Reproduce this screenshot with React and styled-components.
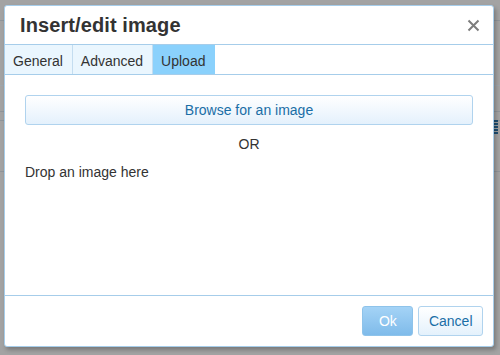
import React from 'react'
import styled, { createGlobalStyle } from 'styled-components'

const GlobalStyle = createGlobalStyle`
html, body {
  margin: 0;
  padding: 0;
  background: #a3a3a3;
  font-family: "Liberation Sans", Arial, sans-serif;
}
`

const Page = styled.div`
position: relative;
width: 500px;
height: 355px;
overflow: hidden;
background: #a3a3a3;
`

const Backdrop = styled.div`
display: flex;
flex-direction: column;
width: 100%;
height: 100%;
`

const BackRow = styled.div`
height: ${props => props.h}px;
border-bottom: 1px solid ${props => props.line || '#8f959a'};
`

const Dialog = styled.div`
position: absolute;
left: 4px;
top: 5px;
width: 488px;
height: 340px;
display: flex;
flex-direction: column;
background: #fff;
border: 1px solid #a6cdea;
border-radius: 3px;
box-shadow: 2px 3px 4px rgba(0, 0, 0, 0.25);
`

const Header = styled.div`
height: 38px;
display: flex;
align-items: center;
justify-content: space-between;
padding: 0 12px 0 15px;
border-bottom: 1px solid #a6cdea;
`

const Title = styled.h1`
margin: 0;
font-size: 20px;
font-weight: bold;
color: #333;
letter-spacing: 0.1px;
`

const Close = styled.button`
border: 0;
background: none;
padding: 0;
width: 16px;
height: 16px;
display: flex;
align-items: center;
justify-content: center;
cursor: pointer;
`

const Tabs = styled.div`
display: flex;
height: 29px;
border-bottom: 1px solid #a6cdea;
`

const Tab = styled.div`
display: flex;
align-items: center;
padding: 2px 9px 0 8px;
font-size: 14px;
color: #333;
background: ${props => props.active ? '#8ad1fc' : '#eaf6fe'};
border-right: 1px solid ${props => props.active ? '#8ad1fc' : '#c4ddf0'};
`

const Body = styled.div`
flex: 1;
padding: 20px 20px 0;
display: flex;
flex-direction: column;
`

const Button = styled.button`
height: 30px;
padding: 0 9.5px;
font-family: "Liberation Sans", Arial, sans-serif;
font-size: 14px;
border-radius: 3px;
cursor: pointer;
color: ${props => props.primary ? '#fff' : '#1a6ea6'};
border: 1px solid ${props => props.primary ? '#8ec3ea' : '#b0d3ee'};
background: ${props => props.primary
  ? 'linear-gradient(#a4d3f6, #7fbbea)'
  : 'linear-gradient(#ffffff, #e4f1fc)'};
`

const WideButton = styled(Button)`
width: 100%;
`

const OkButton = styled(Button)`
width: 51px;
`

const Or = styled.div`
text-align: center;
font-size: 14px;
color: #333;
margin-top: 11px;
`

const Drop = styled.div`
font-size: 14px;
color: #333;
margin-top: 12px;
`

const Footer = styled.div`
height: 50px;
border-top: 1px solid #a6cdea;
display: flex;
align-items: center;
justify-content: flex-end;
gap: 5px;
padding: 0 10px;
`

const Marker = styled.div`
position: absolute;
right: 2px;
top: 120px;
width: 4px;
height: 14px;
background: repeating-linear-gradient(#1d4f73 0 2px, transparent 2px 3px);
`

const App = () => {
  return (
    <Page>
      <GlobalStyle />
      <Backdrop>
        <BackRow h={20} />
        <BackRow h={64} line="#9ea6ad" />
        <BackRow h={25} />
        <BackRow h={8} />
        <BackRow h={50} />
      </Backdrop>
      <Marker />
      <Dialog>
        <Header>
          <Title>Insert/edit image</Title>
          <Close aria-label="Close">
            <svg width="13" height="13" viewBox="0 0 13 13">
              <path d="M1.5 1.5 L11.5 11.5 M11.5 1.5 L1.5 11.5" stroke="#7d7d7d" strokeWidth="2" />
            </svg>
          </Close>
        </Header>
        <Tabs>
          <Tab>General</Tab>
          <Tab>Advanced</Tab>
          <Tab active>Upload</Tab>
        </Tabs>
        <Body>
          <WideButton>Browse for an image</WideButton>
          <Or>OR</Or>
          <Drop>Drop an image here</Drop>
        </Body>
        <Footer>
          <OkButton primary>Ok</OkButton>
          <Button>Cancel</Button>
        </Footer>
      </Dialog>
    </Page>
  )
}

export default App
